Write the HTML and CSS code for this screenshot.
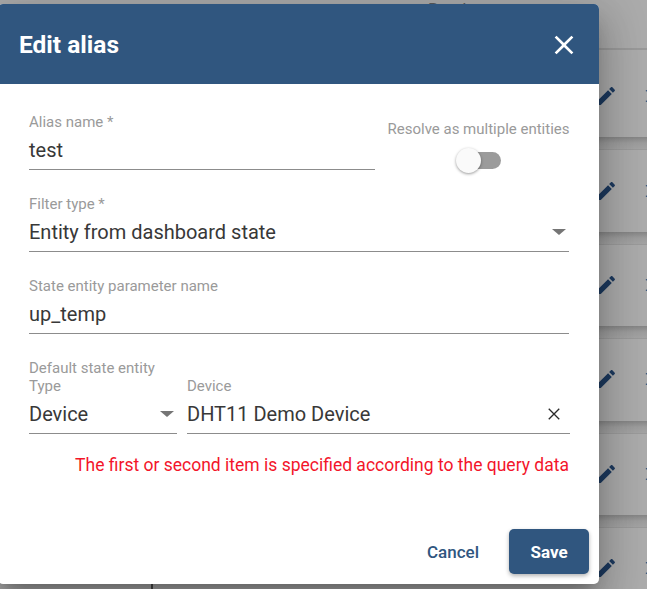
FILE: index.html
```html
<!DOCTYPE html>
<html lang="en">
<head>
<meta charset="utf-8">
<title>Edit alias</title>
<link rel="stylesheet" href="styles.css">
</head>
<body>
<div class="page">
  <div class="page-head"><span class="page-title">Read</span></div>
  <div class="rows">
    <div class="row"><div class="row-main"></div><svg class="edit" viewBox="0 0 24 24"><path d="M3 17.25V21h3.75L17.81 9.94l-3.75-3.75L3 17.25zM20.71 7.04c.39-.39.39-1.02 0-1.41l-2.34-2.34c-.39-.39-1.02-.39-1.41 0l-1.83 1.83 3.75 3.75 1.83-1.83z"/></svg><svg class="more" viewBox="0 0 4 16"><circle cx="2" cy="1" r="1"/><circle cx="2" cy="15" r="1"/></svg></div>
    <div class="row"><div class="row-main"></div><svg class="edit" viewBox="0 0 24 24"><path d="M3 17.25V21h3.75L17.81 9.94l-3.75-3.75L3 17.25zM20.71 7.04c.39-.39.39-1.02 0-1.41l-2.34-2.34c-.39-.39-1.02-.39-1.41 0l-1.83 1.83 3.75 3.75 1.83-1.83z"/></svg><svg class="more" viewBox="0 0 4 16"><circle cx="2" cy="1" r="1"/><circle cx="2" cy="15" r="1"/></svg></div>
    <div class="row"><div class="row-main"></div><svg class="edit" viewBox="0 0 24 24"><path d="M3 17.25V21h3.75L17.81 9.94l-3.75-3.75L3 17.25zM20.71 7.04c.39-.39.39-1.02 0-1.41l-2.34-2.34c-.39-.39-1.02-.39-1.41 0l-1.83 1.83 3.75 3.75 1.83-1.83z"/></svg><svg class="more" viewBox="0 0 4 16"><circle cx="2" cy="1" r="1"/><circle cx="2" cy="15" r="1"/></svg></div>
    <div class="row"><div class="row-main"></div><svg class="edit" viewBox="0 0 24 24"><path d="M3 17.25V21h3.75L17.81 9.94l-3.75-3.75L3 17.25zM20.71 7.04c.39-.39.39-1.02 0-1.41l-2.34-2.34c-.39-.39-1.02-.39-1.41 0l-1.83 1.83 3.75 3.75 1.83-1.83z"/></svg><svg class="more" viewBox="0 0 4 16"><circle cx="2" cy="1" r="1"/><circle cx="2" cy="15" r="1"/></svg></div>
    <div class="row"><div class="row-main"></div><svg class="edit" viewBox="0 0 24 24"><path d="M3 17.25V21h3.75L17.81 9.94l-3.75-3.75L3 17.25zM20.71 7.04c.39-.39.39-1.02 0-1.41l-2.34-2.34c-.39-.39-1.02-.39-1.41 0l-1.83 1.83 3.75 3.75 1.83-1.83z"/></svg><svg class="more" viewBox="0 0 4 16"><circle cx="2" cy="1" r="1"/><circle cx="2" cy="15" r="1"/></svg></div>
    <div class="row"><div class="row-main has-divider"></div><svg class="edit" viewBox="0 0 24 24"><path d="M3 17.25V21h3.75L17.81 9.94l-3.75-3.75L3 17.25zM20.71 7.04c.39-.39.39-1.02 0-1.41l-2.34-2.34c-.39-.39-1.02-.39-1.41 0l-1.83 1.83 3.75 3.75 1.83-1.83z"/></svg><svg class="more" viewBox="0 0 4 16"><circle cx="2" cy="1" r="1"/><circle cx="2" cy="15" r="1"/></svg></div>
  </div>
</div>

<div class="dialog">
  <header class="dialog-head">
    <h2 class="dialog-title">Edit alias</h2>
    <svg class="close-icon" viewBox="0 0 24 24"><path d="M19 6.41L17.59 5 12 10.59 6.41 5 5 6.41 10.59 12 5 17.59 6.41 19 12 13.41 17.59 19 19 17.59 13.41 12z"/></svg>
  </header>
  <div class="dialog-body">
    <div class="top-row">
      <div class="field grow">
        <div class="label">Alias name *</div>
        <div class="value">test</div>
      </div>
      <div class="resolve">
        <div class="resolve-label">Resolve as multiple entities</div>
        <div class="toggle"><span class="toggle-thumb"></span></div>
      </div>
    </div>
    <div class="field">
      <div class="label">Filter type *</div>
      <div class="value with-end">Entity from dashboard state<span class="arrow"></span></div>
    </div>
    <div class="field">
      <div class="label">State entity parameter name</div>
      <div class="value">up_temp</div>
    </div>
    <div class="entity">
      <div class="label">Default state entity</div>
      <div class="entity-row">
        <div class="field type-field">
          <div class="label short">Type</div>
          <div class="value with-end">Device<span class="arrow"></span></div>
        </div>
        <div class="field device-field">
          <div class="label short">Device</div>
          <div class="value with-end">DHT11 Demo Device<svg class="clear-icon" viewBox="0 0 24 24"><path d="M5.7 5.7l12.6 12.6M18.3 5.7L5.7 18.3"/></svg></div>
        </div>
      </div>
    </div>
    <p class="note">The first or second item is specified according to the query data</p>
  </div>
  <footer class="dialog-actions">
    <button class="btn-text" type="button">Cancel</button>
    <button class="btn-save" type="button">Save</button>
  </footer>
</div>
</body>
</html>
```
FILE: styles.css
```css
* { box-sizing: border-box; }
html, body { margin: 0; height: 100%; overflow: hidden; }
body {
  background: #ababab;
  font-family: Roboto, "Liberation Sans", sans-serif;
  color: #383838;
}

/* dimmed page behind the dialog */
.page { height: 589px; overflow: hidden; }
.page-head {
  height: 50px;
  padding: 0 0 0 428px;
  border-bottom: 2px solid #999;
}
.page-title { font-size: 17px; line-height: 18px; color: #5a5a5a; display: block; }
.rows {
  display: flex;
  flex-direction: column;
  gap: 12px;
  padding-top: 5px;
}
.row {
  height: 82.4px;
  flex: none;
  display: flex;
  align-items: center;
  background: #ababab;
  position: relative;
}
.row + .row::before {
  content: "";
  display: block;
  position: absolute;
  left: 0;
  right: 0;
  top: -12px;
  height: 12px;
  background: linear-gradient(#858585, #9c9c9c 50%, #a3a3a3);
  border-bottom: 1px solid #9a9a9a;
}
.row-main { width: 594px; height: 100%; flex: none; }
.row-main.has-divider {
  background: linear-gradient(#4a4a4a, #4a4a4a) 151px 0 / 2px 100% no-repeat;
}
.edit { width: 24px; height: 24px; flex: none; fill: #1d3a5f; }
.more { width: 3px; height: 16px; flex: none; margin-left: 27px; fill: #2f4f78; }

/* dialog */
.dialog {
  position: absolute;
  left: -2px;
  top: 4px;
  width: 601px;
  height: 580px;
  background: #fff;
  border-radius: 5px;
  overflow: hidden;
  display: flex;
  flex-direction: column;
  box-shadow: 0 11px 15px -7px rgba(0, 0, 0, .25), 0 24px 38px 3px rgba(0, 0, 0, .16), 0 9px 46px 8px rgba(0, 0, 0, .14);
}
.dialog-head {
  height: 80px;
  flex: none;
  background: #30567f;
  color: #fff;
  display: flex;
  align-items: center;
  justify-content: space-between;
  padding: 0 19px 0 21px;
}
.dialog-title { margin: 0; font-size: 24.5px; font-weight: 700; }
.close-icon { width: 32px; height: 32px; fill: #fff; margin-top: 2px; }

.dialog-body {
  flex: 1;
  padding: 28px 30px 0 31px;
  display: flex;
  flex-direction: column;
  gap: 24px;
}
.top-row { display: flex; align-items: flex-start; }
.grow { flex: none; width: 346px; }
.field { display: flex; flex-direction: column; }
.label {
  font-size: 15px;
  line-height: 20px;
  color: #9a9a9a;
  white-space: nowrap;
}
.label.short { line-height: 18px; margin-bottom: 7px; }
.field > .label:not(.short) { margin-bottom: 6px; }
.value {
  font-size: 20px;
  line-height: 24px;
  padding-bottom: 7px;
  border-bottom: 1px solid #8c8c8c;
  display: flex;
  align-items: center;
  justify-content: space-between;
  white-space: nowrap;
}
.arrow {
  width: 0;
  height: 0;
  border-left: 7px solid transparent;
  border-right: 7px solid transparent;
  border-top: 6px solid #757575;
  margin-right: 3px;
  flex: none;
}
.resolve {
  margin-left: 13px;
  width: 181px;
  margin-top: 7px;
  display: flex;
  flex-direction: column;
  align-items: center;
}
.resolve-label { font-size: 15px; line-height: 20px; color: #9a9a9a; white-space: nowrap; }
.toggle {
  width: 45px;
  height: 17px;
  margin-top: 13px;
  display: flex;
  align-items: center;
  background: linear-gradient(#9b9b9b, #9b9b9b) 100% 0 / 32px 100% no-repeat;
  border-radius: 0 9px 9px 0;
}
.toggle-thumb {
  width: 25px;
  height: 25px;
  border-radius: 50%;
  background: #fafafa;
  box-shadow: 0 1px 3px rgba(0, 0, 0, .4);
}
.entity { display: flex; flex-direction: column; }
.entity-row { display: flex; gap: 10px; margin-top: -1px; }
.type-field { width: 148px; flex: none; }
.device-field { width: 383px; flex: none; }
.clear-icon { width: 20px; height: 20px; fill: none; stroke: #2a2a2a; stroke-width: 1.6; margin-right: 6px; flex: none; }
.note {
  margin: -3px 0 0;
  font-size: 17.5px;
  line-height: 20px;
  color: #f3152a;
  text-align: right;
  white-space: nowrap;
}
.dialog-actions {
  flex: none;
  display: flex;
  justify-content: flex-end;
  align-items: center;
  gap: 14px;
  padding: 0 10px 10px 0;
}
.btn-text, .btn-save {
  font-family: inherit;
  font-size: 17px;
  border: 0;
  border-radius: 5px;
  height: 45px;
}
.btn-text { background: transparent; color: #30567f; font-weight: 500; padding: 0 16px; }
.btn-save {
  width: 80px;
  background: #30567f;
  color: #fff;
  font-weight: 700;
  box-shadow: 0 2px 4px rgba(0, 0, 0, .3);
}
```
